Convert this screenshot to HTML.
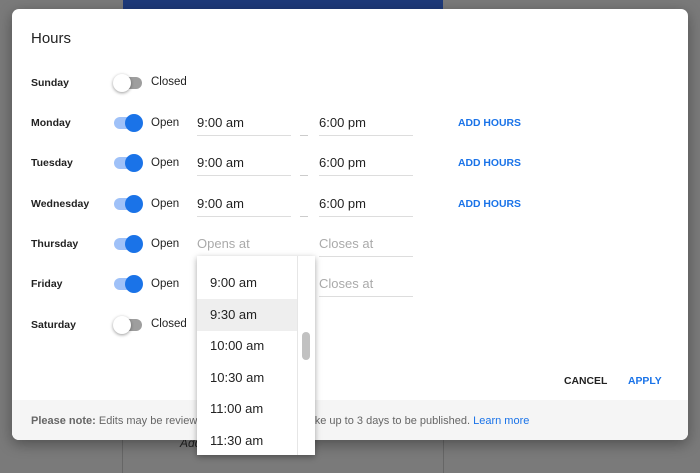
<!DOCTYPE html>
<html><head><style>
*{margin:0;padding:0;box-sizing:border-box}
body{width:700px;height:473px;background:#7a7a7a;position:relative;overflow:hidden;font-family:"Liberation Sans",Arial,sans-serif;color:#202124}
.abs{position:absolute}
.dlg{position:absolute;left:12px;top:9px;width:676px;height:431px;background:#fff;border-radius:7px;overflow:hidden;box-shadow:0 4px 14px rgba(0,0,0,.35)}
.foot{position:absolute;left:0;top:391px;width:676px;height:40px;background:#f5f5f5;font-size:11px;color:#666;padding:15px 0 0 19px}
.day{position:absolute;left:19px;font-size:10.5px;font-weight:bold;color:#222}
.tr{position:absolute;left:102px;width:28px;height:12px;border-radius:6px}
.kn{position:absolute;width:18px;height:18px;border-radius:50%}
.st{position:absolute;left:139px;font-size:11.5px;color:#222}
.in{position:absolute;width:94px;height:24px;border-bottom:1px solid #ddd;font-size:13px;color:#222;padding-top:3px}
.ph{color:#aaa}
.dash{position:absolute;left:288px;width:8px;border-top:1px solid #ccc}
.add{position:absolute;left:446px;font-size:10.4px;font-weight:bold;color:#1a73e8}
.dd{position:absolute;left:197px;top:256px;width:118px;height:199px;background:#fff;box-shadow:0 2px 6px rgba(0,0,0,.35);overflow:hidden}
.opt{position:absolute;left:0;width:100px;height:32px;font-size:13px;color:#222;padding-left:13px;line-height:32px}
</style></head><body>
<div class="abs" style="left:123px;top:0;width:320px;height:12px;background:#1e3a7a"></div>
<div class="abs" style="left:122px;top:440px;width:1px;height:33px;background:#666"></div>
<div class="abs" style="left:443px;top:440px;width:1px;height:33px;background:#666"></div>
<div class="abs" style="left:180px;top:436px;font-size:12px;font-style:italic;color:#222">Add</div>
<div class="dlg">
<div class="abs" style="left:19px;top:21px;font-size:15px;color:#222">Hours</div>

<div class="day" style="top:68px">Sunday</div>
<div class="tr" style="top:68px;background:#9e9e9e"></div><div class="kn" style="left:101px;top:65px;background:#fff;box-shadow:0 1px 3px rgba(0,0,0,.4)"></div>
<div class="st" style="top:67px">Closed</div>

<div class="day" style="top:108px">Monday</div>
<div class="tr" style="top:108px;background:#9fc1f8"></div><div class="kn" style="left:113px;top:105px;background:#1a73e8"></div>
<div class="st" style="top:108px">Open</div>
<div class="in" style="left:185px;top:103px">9:00 am</div><div class="dash" style="top:126px"></div>
<div class="in" style="left:307px;top:103px">6:00 pm</div>
<div class="add" style="top:109px">ADD HOURS</div>

<div class="day" style="top:148px">Tuesday</div>
<div class="tr" style="top:148px;background:#9fc1f8"></div><div class="kn" style="left:113px;top:145px;background:#1a73e8"></div>
<div class="st" style="top:148px">Open</div>
<div class="in" style="left:185px;top:143px">9:00 am</div><div class="dash" style="top:166px"></div>
<div class="in" style="left:307px;top:143px">6:00 pm</div>
<div class="add" style="top:149px">ADD HOURS</div>

<div class="day" style="top:189px">Wednesday</div>
<div class="tr" style="top:189px;background:#9fc1f8"></div><div class="kn" style="left:113px;top:186px;background:#1a73e8"></div>
<div class="st" style="top:189px">Open</div>
<div class="in" style="left:185px;top:184px">9:00 am</div><div class="dash" style="top:207px"></div>
<div class="in" style="left:307px;top:184px">6:00 pm</div>
<div class="add" style="top:190px">ADD HOURS</div>

<div class="day" style="top:229px">Thursday</div>
<div class="tr" style="top:229px;background:#9fc1f8"></div><div class="kn" style="left:113px;top:226px;background:#1a73e8"></div>
<div class="st" style="top:229px">Open</div>
<div class="in ph" style="left:185px;top:224px">Opens at</div><div class="dash" style="top:247px"></div>
<div class="in ph" style="left:307px;top:224px">Closes at</div>

<div class="day" style="top:269px">Friday</div>
<div class="tr" style="top:269px;background:#9fc1f8"></div><div class="kn" style="left:113px;top:266px;background:#1a73e8"></div>
<div class="st" style="top:269px">Open</div>
<div class="in ph" style="left:307px;top:264px">Closes at</div>

<div class="day" style="top:310px">Saturday</div>
<div class="tr" style="top:310px;background:#9e9e9e"></div><div class="kn" style="left:101px;top:307px;background:#fff;box-shadow:0 1px 3px rgba(0,0,0,.4)"></div>
<div class="st" style="top:309px">Closed</div>

<div class="abs" style="left:552px;top:367px;font-size:10.4px;font-weight:bold;color:#222">CANCEL</div>
<div class="abs" style="left:616px;top:367px;font-size:10.4px;font-weight:bold;color:#1a73e8">APPLY</div>

<div class="foot"><b>Please note:</b> Edits may be reviewed for quality and can take up to 3 days to be published. <span style="color:#1a73e8">Learn more</span></div>
</div>

<div class="dd">
<div class="abs" style="left:100px;top:0;width:1px;height:199px;background:#e6e6e6"></div>
<div class="abs" style="left:105px;top:76px;width:8px;height:28px;border-radius:4px;background:#c1c1c1"></div>
<div class="opt" style="top:11px">9:00 am</div>
<div class="opt" style="top:43px;background:#eee">9:30 am</div>
<div class="opt" style="top:74px">10:00 am</div>
<div class="opt" style="top:106px">10:30 am</div>
<div class="opt" style="top:137px">11:00 am</div>
<div class="opt" style="top:169px">11:30 am</div>
</div>
</body></html>
